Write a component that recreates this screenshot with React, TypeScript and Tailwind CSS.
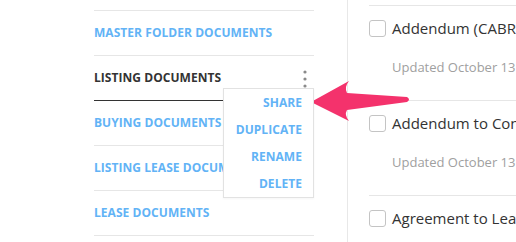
const navItems = [
  { label: 'MASTER FOLDER DOCUMENTS' },
  { label: 'LISTING DOCUMENTS', active: true },
  { label: 'BUYING DOCUMENTS' },
  { label: 'LISTING LEASE DOCUMENTS' },
  { label: 'LEASE DOCUMENTS' },
]

const docs = [
  { title: 'Addendum (CABR)', updated: 'Updated October 13' },
  { title: 'Addendum to Contract', updated: 'Updated October 13' },
  { title: 'Agreement to Lease', updated: 'Updated October 13' },
]

const menuItems = ['SHARE', 'DUPLICATE', 'RENAME', 'DELETE']

function Kebab() {
  return (
    <svg width="4" height="18" viewBox="0 0 4 18" fill="#8a8a8a" aria-hidden="true">
      <circle cx="2" cy="2" r="1.6" />
      <circle cx="2" cy="9" r="1.6" />
      <circle cx="2" cy="16" r="1.6" />
    </svg>
  )
}

function Arrow() {
  return (
    <svg
      className="absolute inset-0 pointer-events-none"
      width="516"
      height="242"
      viewBox="0 0 516 242"
      aria-hidden="true"
    >
      <path
        d="M311 102 L349 81 Q344 87 347 93 L407 97 Q411 99.5 407 102 L347 110 Q344 115 349 121 Z"
        fill="#f4326c"
      />
    </svg>
  )
}

export default function App() {
  return (
    <div
      className="relative flex w-[516px] h-[242px] overflow-hidden bg-white"
      style={{ fontFamily: '"Open Sans", "Liberation Sans", sans-serif' }}
    >
      <div className="w-[348px] shrink-0 border-r border-[#e8e8e8] pl-[94px] pr-[33px] pt-[10px]">
        <ul className="border-t border-[#e6e6e6]">
          {navItems.map((item) => (
            <li
              key={item.label}
              className={`relative flex h-[45px] items-center border-b ${
                item.active ? 'border-[#333333]' : 'border-[#e6e6e6]'
              }`}
            >
              <span
                className={`whitespace-nowrap text-[12px] font-bold tracking-[0.05px] ${
                  item.active ? 'text-[#333333]' : 'text-[#62b3f6]'
                }`}
              >
                {item.label}
              </span>
              {item.active && (
                <>
                  <div className="absolute right-[7px] top-[14px] flex">
                    <Kebab />
                  </div>
                  <div className="absolute left-[129px] top-[32px] z-10 w-[91px] border border-[#e2e2e2] bg-white shadow-[0_1px_2px_rgba(0,0,0,0.04)]">
                    {menuItems.map((m) => (
                      <div
                        key={m}
                        className="flex h-[27px] items-center justify-end pr-[11px] text-[12px] font-bold tracking-[0.05px] text-[#62b3f6]"
                      >
                        {m}
                      </div>
                    ))}
                  </div>
                </>
              )}
            </li>
          ))}
        </ul>
      </div>

      <div className="min-w-0 flex-1 pl-[21px] pt-[5px]">
        <ul className="border-t border-[#e6e6e6]">
          {docs.map((d) => (
            <li key={d.title} className="h-[95px] border-b border-[#e6e6e6] pt-[14px]">
              <div className="flex items-center gap-[6px]">
                <span className="h-[17px] w-[17px] shrink-0 rounded-[3px] border border-[#c4c4c4] bg-white" />
                <span className="whitespace-nowrap text-[15px] leading-[17px] text-[#333333]">{d.title}</span>
              </div>
              <div className="mt-[22px] whitespace-nowrap pl-[23px] text-[13px] leading-[16px] text-[#a0a0a0]">
                {d.updated}
              </div>
            </li>
          ))}
        </ul>
      </div>

      <Arrow />
    </div>
  )
}
